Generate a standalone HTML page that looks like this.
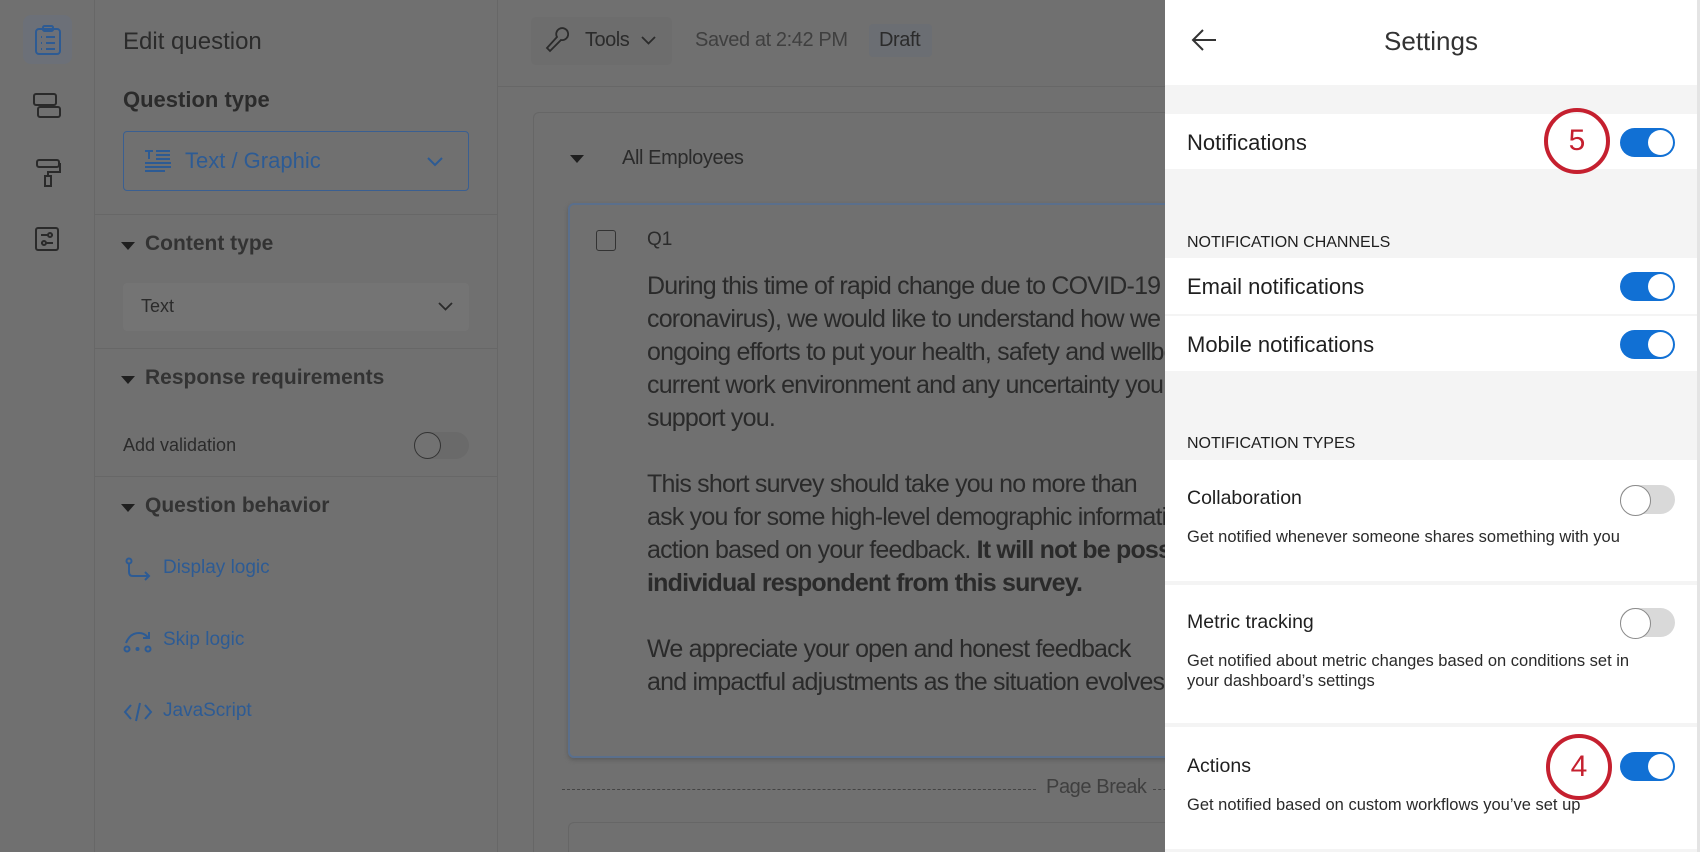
<!DOCTYPE html>
<html><head><meta charset="utf-8"><style>
*{margin:0;padding:0;box-sizing:border-box}
html{width:1700px;height:852px;overflow:hidden}
body{width:1700px;height:852px;overflow:hidden;background:#707070;font-family:"Liberation Sans",sans-serif;position:relative;color:#2b2b2b}
.a{position:absolute;white-space:nowrap}
.line{position:absolute;background:#676767}
.tog{position:absolute;width:55px;height:29px;border-radius:15px}
.tog.on{background:#1170d4}
.tog.on::after{content:"";position:absolute;right:2px;top:2px;width:25px;height:25px;border-radius:50%;background:#fff}
.tog.off{background:#d9d9d9}
.tog.off::after{content:"";position:absolute;left:0;top:0;width:29px;height:29px;border-radius:50%;background:#fff;border:1.5px solid #8a8a8a}
.body{font-size:25px;color:#2a2a2a;letter-spacing:-0.8px}
.st{font-size:22px;color:#1f1f1f}
.ds{font-size:16.5px;color:#2a2a2a}
.hd{font-size:16px;color:#1f1f1f}
.circ{position:absolute;width:66px;height:66px;border:4px solid #c5202f;border-radius:50%;color:#c5202f;font-size:30px;text-align:center;line-height:58px}
#clip{position:absolute;left:498px;top:0;width:667px;height:852px;overflow:hidden}
</style></head><body>
<div class="line" style="left:94px;top:0;width:1px;height:852px"></div>
<div class="a" style="left:23px;top:15px;width:49px;height:49px;border-radius:8px;background:#6c7078"></div>
<svg class="a" style="left:34px;top:25px" width="28" height="30" viewBox="0 0 28 30" fill="none" stroke="#2d5b94" stroke-width="2"><rect x="2" y="4" width="24" height="25" rx="3"/><rect x="9" y="1" width="10" height="5" rx="1.5"/><path d="M7 12h1M12 12h9M7 18h1M12 18h9M7 24h1M12 24h9"/></svg>
<svg class="a" style="left:32px;top:92px" width="30" height="28" viewBox="0 0 30 28" fill="none" stroke="#2a2a2a" stroke-width="2"><rect x="2" y="2" width="22" height="11" rx="2"/><rect x="6" y="15" width="22" height="10" rx="2"/></svg>
<svg class="a" style="left:34px;top:158px" width="28" height="30" viewBox="0 0 28 30" fill="none" stroke="#2a2a2a" stroke-width="2"><rect x="3" y="2" width="22" height="7" rx="2"/><path d="M25 6h1v8H14v4"/><rect x="11" y="18" width="6" height="10"/></svg>
<svg class="a" style="left:34px;top:226px" width="26" height="26" viewBox="0 0 26 26" fill="none" stroke="#2a2a2a" stroke-width="2"><rect x="2" y="2" width="22" height="22" rx="2"/><path d="M7 9h12M7 17h12"/><circle cx="16" cy="9" r="2" fill="#707070"/><circle cx="10" cy="17" r="2" fill="#707070"/></svg>
<div class="line" style="left:497px;top:0;width:1px;height:852px"></div>
<div class="a" style="left:123px;top:28px;font-size:24px;color:#2b2b2b">Edit question</div>
<div class="a" style="left:123px;top:87px;font-size:22px;font-weight:bold;color:#2b2b2b">Question type</div>
<div class="a" style="left:123px;top:131px;width:346px;height:60px;border:1.5px solid #3a5f91;border-radius:4px"></div>
<svg class="a" style="left:144px;top:149px" width="28" height="24" viewBox="0 0 28 24" stroke="#2d5b94" stroke-width="2" fill="none"><path d="M1 2h8M5 2v8M12 2h14M12 6h14M12 10h14M1 14h26M1 18h26M1 22h20"/></svg>
<div class="a" style="left:185px;top:148px;font-size:22px;color:#2d5b94">Text / Graphic</div>
<svg class="a" style="left:427px;top:157px" width="16" height="10" viewBox="0 0 16 10" fill="none" stroke="#2d5b94" stroke-width="2"><path d="M1 1l7 7 7-7"/></svg>
<div class="line" style="left:95px;top:214px;width:402px;height:1px"></div>
<svg class="a" style="left:121px;top:242px" width="14" height="8"><path d="M0 0h14L7 8z" fill="#1f1f1f"/></svg>
<div class="a" style="left:145px;top:232px;font-size:21px;font-weight:bold;color:#333">Content type</div>
<div class="a" style="left:123px;top:283px;width:346px;height:48px;background:#747474;border-radius:4px"></div>
<div class="a" style="left:141px;top:296px;font-size:18px;color:#2b2b2b">Text</div>
<svg class="a" style="left:438px;top:302px" width="15" height="9" viewBox="0 0 15 9" fill="none" stroke="#2b2b2b" stroke-width="1.8"><path d="M1 1l6.5 6.5L14 1"/></svg>
<div class="line" style="left:95px;top:348px;width:402px;height:1px"></div>
<svg class="a" style="left:121px;top:376px" width="14" height="8"><path d="M0 0h14L7 8z" fill="#1f1f1f"/></svg>
<div class="a" style="left:145px;top:366px;font-size:21px;font-weight:bold;color:#333">Response requirements</div>
<div class="a" style="left:123px;top:435px;font-size:18px;color:#2b2b2b">Add validation</div>
<div class="a" style="left:414px;top:432px;width:55px;height:27px;border-radius:14px;background:#6a6a6a"></div>
<div class="a" style="left:414px;top:432px;width:27px;height:27px;border-radius:50%;background:#727272;border:1.5px solid #333"></div>
<div class="line" style="left:95px;top:476px;width:402px;height:1px"></div>
<svg class="a" style="left:121px;top:504px" width="14" height="8"><path d="M0 0h14L7 8z" fill="#1f1f1f"/></svg>
<div class="a" style="left:145px;top:494px;font-size:21px;font-weight:bold;color:#333">Question behavior</div>
<svg class="a" style="left:124px;top:557px" width="28" height="24" viewBox="0 0 28 24" fill="none" stroke="#2d5b94" stroke-width="2"><circle cx="5" cy="4" r="2.5"/><path d="M5 7v8q0 4 4 4h16M21 15l4 4-4 4"/></svg>
<div class="a" style="left:163px;top:557px;font-size:19px;color:#2d5b94">Display logic</div>
<svg class="a" style="left:123px;top:629px" width="30" height="24" viewBox="0 0 30 24" fill="none" stroke="#2d5b94" stroke-width="2"><circle cx="4" cy="20" r="2.5"/><circle cx="25" cy="20" r="2.5"/><circle cx="14.5" cy="20" r="1" fill="#2d5b94"/><path d="M3 14q4-10 13-10q6 0 9 5M26 3v6h-6"/></svg>
<div class="a" style="left:163px;top:629px;font-size:19px;color:#2d5b94">Skip logic</div>
<svg class="a" style="left:123px;top:700px" width="30" height="24" viewBox="0 0 30 24" fill="none" stroke="#2d5b94" stroke-width="2"><path d="M8 5l-6 7 6 7M22 5l6 7-6 7M17 3l-4 18"/></svg>
<div class="a" style="left:163px;top:700px;font-size:19px;color:#2d5b94">JavaScript</div>
<div class="line" style="left:498px;top:86px;width:667px;height:1px"></div>
<div class="a" style="left:531px;top:17px;width:141px;height:48px;border-radius:5px;background:#6d6d6d"></div>
<svg class="a" style="left:545px;top:26px" width="24" height="28" viewBox="0 0 24 28" fill="none" stroke="#2b2b2b" stroke-width="1.8"><path d="M14 3a6 6 0 1 1 2 11L5 25l-3-3 10-11a6 6 0 0 1 2-8z"/></svg>
<div class="a" style="left:585px;top:29px;font-size:20px;color:#2b2b2b;letter-spacing:-0.5px">Tools</div>
<svg class="a" style="left:641px;top:36px" width="15" height="9" viewBox="0 0 15 9" fill="none" stroke="#2b2b2b" stroke-width="1.8"><path d="M1 1l6.5 6.5L14 1"/></svg>
<div class="a" style="left:695px;top:29px;font-size:20px;color:#3f3f3f;letter-spacing:-0.4px">Saved at 2:42 PM</div>
<div class="a" style="left:869px;top:24px;width:63px;height:33px;border-radius:4px;background:#6b6e73"></div>
<div class="a" style="left:879px;top:29px;font-size:20px;color:#2b2b2b;letter-spacing:-0.4px">Draft</div>
<div id="clip">
<div class="a" style="left:35px;top:112px;width:700px;height:740px;border:1px solid #666;border-bottom:none;border-radius:6px 6px 0 0"></div>
<svg class="a" style="left:72px;top:155px" width="14" height="8"><path d="M0 0h14L7 8z" fill="#1f1f1f"/></svg>
<div class="a" style="left:124px;top:147px;font-size:20px;color:#2b2b2b;letter-spacing:-0.4px">All Employees</div>
<div class="a" style="left:70px;top:203px;width:700px;height:555px;border:2px solid #5a6f8c;border-radius:6px;box-shadow:0 2px 4px #5c5c5c"></div>
<div class="a" style="left:98px;top:230px;width:20px;height:21px;border:1.5px solid #333;border-radius:3px"></div>
<div class="a" style="left:149px;top:229px;font-size:19px;color:#2b2b2b">Q1</div>
<div class="a body" style="left:149px;top:272px">During this time of rapid change due to COVID-19 (novel</div>
<div class="a body" style="left:149px;top:305px">coronavirus), we would like to understand how we can best</div>
<div class="a body" style="left:149px;top:338px">ongoing efforts to put your health, safety and wellbeing</div>
<div class="a body" style="left:149px;top:371px">current work environment and any uncertainty you</div>
<div class="a body" style="left:149px;top:404px">support you.</div>
<div class="a body" style="left:149px;top:470px">This short survey should take you no more than</div>
<div class="a body" style="left:149px;top:503px">ask you for some high-level demographic information</div>
<div class="a body" style="left:149px;top:536px">action based on your feedback. <b>It will not be possible</b></div>
<div class="a body" style="left:149px;top:569px"><b>individual respondent from this survey.</b></div>
<div class="a body" style="left:149px;top:635px">We appreciate your open and honest feedback</div>
<div class="a body" style="left:149px;top:668px">and impactful adjustments as the situation evolves</div>
<div class="a" style="left:64px;top:789px;width:474px;border-top:1.5px dashed #444"></div>
<div class="a" style="left:548px;top:776px;font-size:20px;color:#3f3f3f;letter-spacing:-0.4px">Page Break</div>
<div class="a" style="left:655px;top:789px;width:50px;border-top:1.5px dashed #444"></div>
<div class="a" style="left:70px;top:822px;width:700px;height:30px;border:1px solid #666;border-bottom:none;border-radius:6px 6px 0 0"></div>
</div>
<div class="a" style="left:1165px;top:0;width:532px;height:852px;background:#f4f4f4"></div>
<div class="a" style="left:1697px;top:0;width:3px;height:852px;background:#e4e4e4"></div>
<div class="a" style="left:1165px;top:0;width:532px;height:85px;background:#fff"></div>
<svg class="a" style="left:1191px;top:28px" width="26" height="24" viewBox="0 0 26 24" fill="none" stroke="#333" stroke-width="2"><path d="M25 12H2M12 2L2 12l10 10"/></svg>
<div class="a" style="left:1165px;top:26px;width:532px;text-align:center;font-size:26px;color:#333">Settings</div>
<div class="a" style="left:1165px;top:114px;width:532px;height:55px;background:#fff"></div>
<div class="a st" style="left:1187px;top:130px">Notifications</div>
<div class="a hd" style="left:1187px;top:234px">NOTIFICATION CHANNELS</div>
<div class="a" style="left:1165px;top:258px;width:532px;height:56px;background:#fff"></div>
<div class="a st" style="left:1187px;top:274px">Email notifications</div>
<div class="a" style="left:1165px;top:316px;width:532px;height:55px;background:#fff"></div>
<div class="a st" style="left:1187px;top:332px">Mobile notifications</div>
<div class="a hd" style="left:1187px;top:435px">NOTIFICATION TYPES</div>
<div class="a" style="left:1165px;top:460px;width:532px;height:121px;background:#fff"></div>
<div class="a" style="left:1187px;top:487px;font-size:19.5px;color:#1f1f1f">Collaboration</div>
<div class="a ds" style="left:1187px;top:528px">Get notified whenever someone shares something with you</div>
<div class="a" style="left:1165px;top:585px;width:532px;height:138px;background:#fff"></div>
<div class="a" style="left:1187px;top:611px;font-size:19.5px;color:#1f1f1f">Metric tracking</div>
<div class="a ds" style="left:1187px;top:652px">Get notified about metric changes based on conditions set in</div>
<div class="a ds" style="left:1187px;top:672px">your dashboard’s settings</div>
<div class="a" style="left:1165px;top:727px;width:532px;height:122px;background:#fff"></div>
<div class="a" style="left:1187px;top:755px;font-size:19.5px;color:#1f1f1f">Actions</div>
<div class="a ds" style="left:1187px;top:796px">Get notified based on custom workflows you’ve set up</div>
<div class="tog on" style="left:1620px;top:128px"></div>
<div class="tog on" style="left:1620px;top:272px"></div>
<div class="tog on" style="left:1620px;top:330px"></div>
<div class="tog off" style="left:1620px;top:485px"></div>
<div class="tog off" style="left:1620px;top:608px"></div>
<div class="tog on" style="left:1620px;top:752px"></div>
<div class="circ" style="left:1544px;top:108px">5</div>
<div class="circ" style="left:1546px;top:734px">4</div>
</body></html>
